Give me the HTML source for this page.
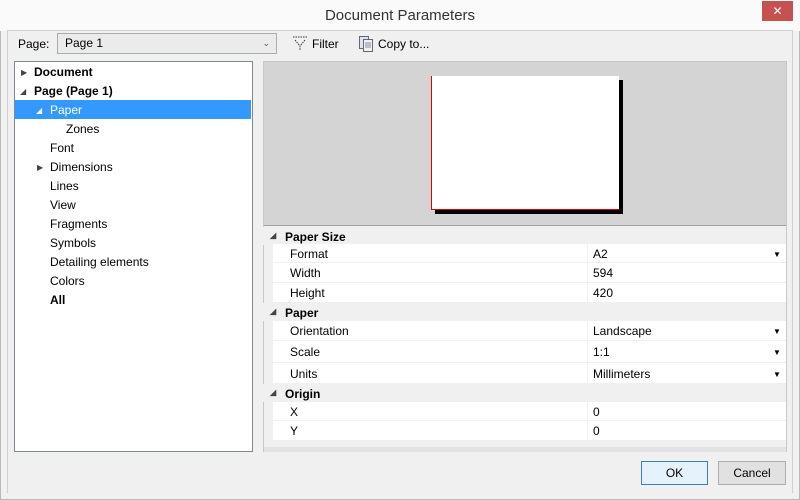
<!DOCTYPE html>
<html><head><style>
*{margin:0;padding:0;box-sizing:border-box}
body{width:800px;height:500px;background:#f0f0f0;font-family:"Liberation Sans",sans-serif;font-size:12px;color:#000;position:relative;overflow:hidden}
.a{position:absolute}
.frame{left:0;top:0;width:800px;height:500px;border:1px solid #b9b9b9;}
.title{left:0;top:0;width:800px;height:31px;background:#fafafa;text-align:center;font-size:15px;line-height:31px;color:#333}
.close{left:762px;top:1px;width:31px;height:20px;background:#c75050;color:#fff;text-align:center;line-height:20px;font-size:12px}
.inner{left:7px;top:30px;width:786px;height:463px;border:1px solid #cfcfcf;border-bottom:none;background:#f0f0f0}
.tree{left:14px;top:61px;width:239px;height:391px;background:#fff;border:1px solid #828790}
.ti{position:absolute;height:19px;line-height:19px;white-space:nowrap}
.tri{position:absolute;font-size:8px;color:#444}
.row{position:absolute;left:273px;width:513px;height:20px;background:#fff;border-bottom:1px solid #f0f0f0}
.row span{position:absolute;line-height:19px;top:1px}
.row .v{left:320px;}
.row .dd{left:500px;font-size:8px}
.row .sep{position:absolute;left:314px;top:0;width:1px;height:100%;background:#f0f0f0}
.hdr{position:absolute;left:263px;width:523px;height:18px;background:#f0f0f0;font-weight:bold;line-height:18px}
.btn{position:absolute;top:461px;height:24px;background:#e1e1e1;border:1px solid #adadad;text-align:center;line-height:22px}
</style></head><body>
<div class="a frame"></div>
<div class="a title">Document Parameters</div>
<div class="a inner"></div>
<div class="a close">✕</div>
<div class="a" style="left:18px;top:36px;line-height:16px">Page:</div>
<div class="a" style="left:57px;top:33px;width:220px;height:21px;border:1px solid #acacac;background:#ebebeb;line-height:19px;padding-left:7px">Page 1<span style="position:absolute;right:6px;top:0;font-size:9px;color:#555">⌄</span></div>
<svg class="a" style="left:292px;top:36px" width="16" height="16"><path d="M1 1h14M3 4l5 6v4M13 4l-5 6" stroke="#333" fill="none" stroke-dasharray="1.5 1"/></svg>
<div class="a" style="left:312px;top:37px">Filter</div>
<svg class="a" style="left:358px;top:35px" width="16" height="17"><rect x="1.5" y="1.5" width="9" height="12" fill="#dde4ee" stroke="#667"/><rect x="5.5" y="4.5" width="9" height="12" fill="#eef2f7" stroke="#667"/><path d="M7 8h6M7 10h6M7 12h6" stroke="#889"/></svg>
<div class="a" style="left:378px;top:37px">Copy to...</div>

<div class="a tree">
<div class="a" style="left:0;top:38px;width:236px;height:19px;background:#3399ff"></div>
<span class="tri" style="left:6px;top:6px">▶</span><div class="ti" style="left:19px;top:1px;font-weight:bold">Document</div>
<span class="tri" style="left:5px;top:25px">◢</span><div class="ti" style="left:19px;top:20px;font-weight:bold">Page (Page 1)</div>
<span class="tri" style="left:21px;top:44px;color:#fff">◢</span><div class="ti" style="left:35px;top:39px;color:#fff">Paper</div>
<div class="ti" style="left:51px;top:58px">Zones</div>
<div class="ti" style="left:35px;top:77px">Font</div>
<span class="tri" style="left:22px;top:101px">▶</span><div class="ti" style="left:35px;top:96px">Dimensions</div>
<div class="ti" style="left:35px;top:115px">Lines</div>
<div class="ti" style="left:35px;top:134px">View</div>
<div class="ti" style="left:35px;top:153px">Fragments</div>
<div class="ti" style="left:35px;top:172px">Symbols</div>
<div class="ti" style="left:35px;top:191px">Detailing elements</div>
<div class="ti" style="left:35px;top:210px">Colors</div>
<div class="ti" style="left:35px;top:229px;font-weight:bold">All</div>
</div>

<div class="a" style="left:263px;top:61px;width:524px;height:391px;background:#f0f0f0;border:1px solid #c8c8c8"></div>
<div class="a" style="left:264px;top:62px;width:522px;height:164px;background:#d4d4d4;border-bottom:1px solid #a0a0a0"></div>
<div class="a" style="left:435px;top:80px;width:188px;height:134px;background:#000"></div>
<div class="a" style="left:431px;top:76px;width:188px;height:134px;background:#fff;border-left:1px solid #e00000;border-bottom:1px solid #e00000"></div>

<div class="hdr" style="top:227px"><span class="tri" style="left:7px;top:0">◢</span><span style="position:absolute;left:22px;top:1px">Paper Size</span></div>
<div class="row" style="top:244px;height:19px"><div class="sep"></div><span style="left:17px">Format</span><span class="v">A2</span><span class="dd">▼</span></div>
<div class="row" style="top:263px"><div class="sep"></div><span style="left:17px">Width</span><span class="v">594</span></div>
<div class="row" style="top:283px"><div class="sep"></div><span style="left:17px">Height</span><span class="v">420</span></div>
<div class="hdr" style="top:303px"><span class="tri" style="left:7px;top:0">◢</span><span style="position:absolute;left:22px;top:1px">Paper</span></div>
<div class="row" style="top:321px"><div class="sep"></div><span style="left:17px">Orientation</span><span class="v">Landscape</span><span class="dd">▼</span></div>
<div class="row" style="top:341px;height:22px"><div class="sep"></div><span style="left:17px;top:2px">Scale</span><span class="v" style="top:2px">1:1</span><span class="dd" style="top:2px">▼</span></div>
<div class="row" style="top:363px;height:21px"><div class="sep"></div><span style="left:17px;top:2px">Units</span><span class="v" style="top:2px">Millimeters</span><span class="dd" style="top:2px">▼</span></div>
<div class="hdr" style="top:384px"><span class="tri" style="left:7px;top:0">◢</span><span style="position:absolute;left:22px;top:1px">Origin</span></div>
<div class="row" style="top:402px;height:19px"><div class="sep"></div><span style="left:17px">X</span><span class="v">0</span></div>
<div class="row" style="top:421px"><div class="sep"></div><span style="left:17px">Y</span><span class="v">0</span></div>
<div class="a" style="left:264px;top:447px;width:522px;height:5px;background:#e2e2e2"></div>

<div class="btn" style="left:641px;width:67px;border-color:#3c7fb1;background:#e5f1fb">OK</div>
<div class="btn" style="left:718px;width:68px">Cancel</div>
</body></html>
